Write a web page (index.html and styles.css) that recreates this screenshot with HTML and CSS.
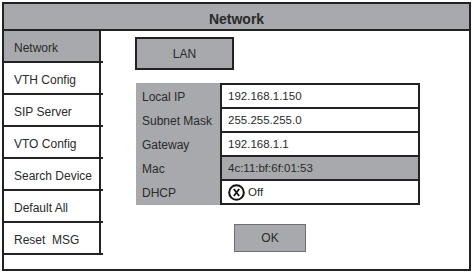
FILE: index.html
```html
<!DOCTYPE html>
<html>
<head>
<meta charset="utf-8">
<link rel="stylesheet" href="styles.css">
</head>
<body>
<div class="frame">
  <div class="header">Network</div>
  <div class="body">
    <div class="sidebar">
      <div class="item active">Network</div>
      <div class="item">VTH Config</div>
      <div class="item">SIP Server</div>
      <div class="item">VTO Config</div>
      <div class="item">Search Device</div>
      <div class="item">Default All</div>
      <div class="item">Reset&nbsp;&nbsp;MSG</div>
    </div>
    <div class="main">
      <div class="lan">LAN</div>
      <div class="table">
        <div class="labels">
          <div class="label">Local IP</div>
          <div class="label">Subnet Mask</div>
          <div class="label">Gateway</div>
          <div class="label">Mac</div>
          <div class="label">DHCP</div>
        </div>
        <div class="values">
          <div class="value">192.168.1.150</div>
          <div class="value">255.255.255.0</div>
          <div class="value">192.168.1.1</div>
          <div class="value gray">4c:11:bf:6f:01:53</div>
          <div class="value dhcp">
            <svg class="xicon" width="17" height="17" viewBox="0 0 17 17">
              <circle cx="8.5" cy="8.5" r="7.3" fill="none" stroke="#111" stroke-width="2"/>
              <path d="M5.8 5 L11.2 12 M11.2 5 L5.8 12" stroke="#111" stroke-width="1.8" fill="none"/>
            </svg>
            <span>Off</span>
          </div>
        </div>
      </div>
      <div class="ok">OK</div>
    </div>
  </div>
</div>
</body>
</html>
```
FILE: styles.css
```css
html, body {
  margin: 0;
  padding: 0;
  background: #fff;
}
body {
  font-family: "Liberation Sans", Arial, sans-serif;
  color: #2a2a2a;
}
.frame {
  box-sizing: border-box;
  width: 469px;
  height: 269px;
  margin: 2px 0 0 2px;
  border: 2px solid #222;
  display: flex;
  flex-direction: column;
}
.header {
  box-sizing: content-box;
  height: 19px;
  padding-top: 6px;
  line-height: 19px;
  font-size: 14px;
  font-weight: bold;
  text-align: center;
  background: #a8a9ac;
  border-bottom: 2px solid #222;
}
.body {
  display: flex;
  flex: 1;
}
.sidebar {
  display: flex;
  flex-direction: column;
  width: 99px;
}
.item {
  box-sizing: border-box;
  height: 32px;
  width: 99px;
  padding: 4px 0 0 10px;
  line-height: 26px;
  font-size: 12px;
  border-bottom: 2px solid #222;
  white-space: nowrap;
  background: linear-gradient(to right, transparent 95px, #222 95px, #222 97px, #fff 97px);
}
.item.active {
  background: linear-gradient(to right, #a8a9ac 95px, #222 95px, #222 97px, #fff 97px);
}
.main {
  flex: 1;
  display: flex;
  flex-direction: column;
  align-items: flex-start;
  padding: 6px 0 0 32px;
}
.lan {
  box-sizing: border-box;
  width: 99px;
  height: 33px;
  border: 2px solid #222;
  background: #a8a9ac;
  font-size: 12px;
  display: flex;
  align-items: center;
  justify-content: center;
}
.table {
  display: grid;
  grid-template-columns: 84px 200px;
  margin: 13px 0 0 1px;
}
.labels {
  background: #a8a9ac;
  padding-top: 2px;
  display: flex;
  flex-direction: column;
}
.label {
  height: 24px;
  line-height: 24px;
  font-size: 12px;
  padding-left: 6px;
  white-space: nowrap;
}
.values {
  border: 2px solid #222;
  display: flex;
  flex-direction: column;
}
.value {
  height: 22px;
  line-height: 22px;
  font-size: 11.5px;
  padding-left: 6px;
  border-top: 2px solid #222;
  background: #fff;
  display: flex;
  align-items: center;
}
.value:first-child {
  border-top: none;
}
.value.gray {
  background: #a8a9ac;
}
.dhcp {
  gap: 3px;
}
.xicon {
  display: block;
}
.ok {
  box-sizing: border-box;
  width: 72px;
  height: 28px;
  margin: 19px 0 0 99px;
  border: 1.5px solid #6f7072;
  background: #a8a9ac;
  font-size: 12px;
  display: flex;
  align-items: center;
  justify-content: center;
}
```
